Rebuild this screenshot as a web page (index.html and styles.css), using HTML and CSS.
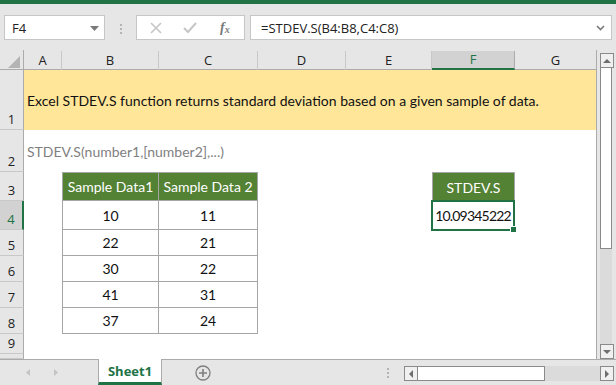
FILE: index.html
```html
<!DOCTYPE html>
<html lang="en">
  <head>
    <meta charset="UTF-8" />
    <title>STDEV.S</title>
    <link rel="stylesheet" href="styles.css">
  </head>
  <body>
    <div class="app">
      <div class="ribbon-edge"></div>

      <div class="formula-row">
        <div class="name-box">
          <span>F4</span>
          <svg class="caret" width="9" height="5" viewBox="0 0 9 5"><path d="M0 0h9L4.5 5z" fill="#7a7a7a"/></svg>
        </div>
        <div class="grip"><i></i><i></i><i></i></div>
        <div class="fx-buttons">
          <svg width="12" height="12" viewBox="0 0 12 12"><path d="M1 1l10 10M11 1L1 11" stroke="#c6c6c6" stroke-width="1.6"/></svg>
          <svg width="14" height="12" viewBox="0 0 14 12"><path d="M1 6l4 4L13 1" stroke="#c6c6c6" stroke-width="2" fill="none"/></svg>
          <span class="fx">f<sub>x</sub></span>
        </div>
        <div class="formula-input">
          <span>=STDEV.S(B4:B8,C4:C8)</span>
          <svg width="9" height="6" viewBox="0 0 9 6"><path d="M1 1l3.5 3.5L8 1" stroke="#7a7a7a" stroke-width="1.6" fill="none"/></svg>
        </div>
      </div>

      <div class="sheet-area">
        <div class="sheet">
          <div class="row col-heads">
            <div class="corner"><svg width="12" height="12" viewBox="0 0 12 12"><path d="M12 0v12H0z" fill="#b4b4b4"/></svg></div>
            <div class="ch">A</div>
            <div class="ch">B</div>
            <div class="ch">C</div>
            <div class="ch">D</div>
            <div class="ch">E</div>
            <div class="ch active">F</div>
            <div class="ch">G</div>
          </div>

          <div class="row r1">
            <div class="rh">1</div>
            <div class="cell title">Excel STDEV.S function returns standard deviation based on a given sample of data.</div>
          </div>

          <div class="row r2">
            <div class="rh">2</div>
            <div class="cell syntax">STDEV.S(number1,[number2],...)</div>
          </div>

          <div class="row r3">
            <div class="rh">3</div>
            <div class="cell"></div>
            <div class="cell th first">Sample Data1</div>
            <div class="cell th">Sample Data 2</div>
            <div class="cell"></div>
            <div class="cell"></div>
            <div class="cell th solo">STDEV.S</div>
            <div class="cell"></div>
          </div>

          <div class="row r4">
            <div class="rh active">4</div>
            <div class="cell"></div>
            <div class="cell td first">10</div>
            <div class="cell td">11</div>
            <div class="cell"></div>
            <div class="cell"></div>
            <div class="cell result">10.09345222</div>
            <div class="cell"></div>
          </div>

          <div class="row r5">
            <div class="rh">5</div>
            <div class="cell"></div>
            <div class="cell td first">22</div>
            <div class="cell td">21</div>
          </div>

          <div class="row r5">
            <div class="rh">6</div>
            <div class="cell"></div>
            <div class="cell td first">30</div>
            <div class="cell td">22</div>
          </div>

          <div class="row r5">
            <div class="rh">7</div>
            <div class="cell"></div>
            <div class="cell td first">41</div>
            <div class="cell td">31</div>
          </div>

          <div class="row r5">
            <div class="rh">8</div>
            <div class="cell"></div>
            <div class="cell td first">37</div>
            <div class="cell td">24</div>
          </div>

          <div class="row r9">
            <div class="rh">9</div>
          </div>

          <div class="row r10">
            <div class="rh"></div>
          </div>
        </div>

        <div class="vscroll">
          <div class="sb-btn"><svg width="8" height="4" viewBox="0 0 8 4"><path d="M0 4h8L4 0z" fill="#6e6e6e"/></svg></div>
          <div class="sb-thumb"></div>
          <div class="sb-track"></div>
          <div class="sb-btn"><svg width="8" height="4" viewBox="0 0 8 4"><path d="M0 0h8L4 4z" fill="#6e6e6e"/></svg></div>
        </div>
      </div>

      <div class="tabbar">
        <div class="tab-nav">
          <svg width="4" height="7" viewBox="0 0 4 7"><path d="M4 0v7L0 3.5z" fill="#c4c4c4"/></svg>
          <svg width="4" height="7" viewBox="0 0 4 7"><path d="M0 0v7L4 3.5z" fill="#c4c4c4"/></svg>
        </div>
        <div class="tab">Sheet1</div>
        <div class="add-sheet">
          <svg width="16" height="16" viewBox="0 0 16 16"><circle cx="8" cy="8" r="7" stroke="#7f7f7f" stroke-width="1.3" fill="none"/><path d="M8 4v8M4 8h8" stroke="#7f7f7f" stroke-width="1.6"/></svg>
        </div>
        <div class="grip tab-grip"><i></i><i></i><i></i></div>
        <div class="hscroll">
          <div class="sb-btn"><svg width="4" height="8" viewBox="0 0 4 8"><path d="M4 0v8L0 4z" fill="#6e6e6e"/></svg></div>
          <div class="sb-thumb"></div>
          <div class="sb-track"></div>
          <div class="sb-btn"><svg width="4" height="8" viewBox="0 0 4 8"><path d="M0 0v8L4 4z" fill="#6e6e6e"/></svg></div>
        </div>
      </div>
    </div>
  </body>
</html>
```

FILE: styles.css
```css
body {
  margin: 0;
  font-family: "Open Sans", "Noto Sans", sans-serif;
  background: #e6e6e6;
}

.app {
  width: 616px;
  height: 385px;
  display: flex;
  flex-direction: column;
  background: #e6e6e6;
  overflow: hidden;
}

.ribbon-edge {
  height: 4px;
  background: #217346;
}

/* formula bar */

.formula-row {
  height: 46px;
  display: flex;
  align-items: flex-start;
  padding: 11px 4px 0 4px;
  box-sizing: border-box;
}

.name-box {
  width: 101px;
  height: 25px;
  box-sizing: border-box;
  background: #fff;
  border: 1px solid #c6c6c6;
  display: flex;
  align-items: center;
  justify-content: space-between;
  padding: 0 5px 0 7px;
  font-size: 13px;
  color: #222;
}

.caret {
  margin-top: 1px;
}

.grip {
  display: flex;
  flex-direction: column;
  gap: 2px;
  width: 31px;
  align-items: center;
  padding-top: 9px;
}

.grip i {
  width: 2px;
  height: 2px;
  background: #b4b4b4;
}

.fx-buttons {
  width: 109px;
  height: 25px;
  box-sizing: border-box;
  background: #fff;
  border: 1px solid #c6c6c6;
  display: flex;
  align-items: center;
  padding: 0 10px 0 13px;
  gap: 21px;
}

.fx {
  font-family: "Liberation Serif", serif;
  font-style: italic;
  font-weight: bold;
  font-size: 14px;
  color: #7a7a7a;
  margin-left: 2px;
}

.fx sub {
  font-size: 10px;
  vertical-align: -1px;
}

.formula-input {
  flex: 1;
  margin-left: 5px;
  height: 25px;
  box-sizing: border-box;
  background: #fff;
  border: 1px solid #c6c6c6;
  display: flex;
  align-items: center;
  justify-content: space-between;
  padding: 0 6px 0 10px;
  font-size: 13px;
  color: #222;
}

/* sheet */

.sheet-area {
  height: 309px;
  display: flex;
}

.sheet {
  width: 597px;
  background: #fff;
  border-right: 1px solid #ababab;
  box-sizing: border-box;
  display: flex;
  flex-direction: column;
}

.row {
  display: grid;
  grid-template-columns: 24px 38px 97px 99px 88px 86px 83px 81px;
}

.col-heads {
  height: 20px;
  background: #e6e6e6;
  border-bottom: 1px solid #ababab;
  box-sizing: border-box;
}

.corner {
  display: flex;
  align-items: flex-end;
  justify-content: flex-end;
  padding: 0 3px 2px 0;
  border-right: 1px solid #ababab;
}

.ch {
  font-size: 13px;
  color: #222;
  text-align: center;
  line-height: 19px;
  border-right: 1px solid #c8c8c8;
  margin-top: 1px;
}

.ch:last-child {
  border-right: none;
}

.ch.active {
  background: #d2d2d2;
  color: #217346;
  border-bottom: 2px solid #217346;
  line-height: 17px;
  border-right-color: #ababab;
}

.rh {
  background: #e6e6e6;
  border-right: 1px solid #ababab;
  border-bottom: 1px solid #c8c8c8;
  box-sizing: border-box;
  font-size: 13px;
  color: #222;
  display: flex;
  align-items: flex-end;
  justify-content: center;
  padding-bottom: 1px;
}

.rh.active {
  background: #d2d2d2;
  color: #217346;
  border-right: 2px solid #217346;
}

.cell {
  font-family: "Lato", "Open Sans", sans-serif;
  font-size: 14px;
  color: #111;
  display: flex;
  align-items: center;
  box-sizing: border-box;
  white-space: nowrap;
}

.r1 { height: 60px; }
.r2 { height: 42px; }
.r3 { height: 29px; }
.r4 { height: 29px; }
.r5 { height: 26px; }
.r9 { height: 20px; }
.r10 { flex: 1; }

.r9 .rh {
  align-items: center;
}

.title {
  grid-column: 2 / 9;
  background: #ffe699;
  padding-left: 3px;
}

.syntax {
  grid-column: 2 / 9;
  color: #7f7f7f;
  padding-left: 3px;
}

.th,
.td {
  justify-content: center;
  border-right: 1px solid #a6a6a6;
  border-bottom: 1px solid #a6a6a6;
}

.th {
  background: #548235;
  color: #fff;
  border-top: 1px solid #a6a6a6;
}

.first,
.solo {
  border-left: 1px solid #a6a6a6;
}

.solo {
  border-bottom: none;
}

.result {
  position: relative;
  justify-content: center;
  letter-spacing: -0.8px;
  border: 2px solid #217346;
  margin: -1px 0 -1px -1px;
}

.result::after {
  content: "";
  position: absolute;
  right: -4px;
  bottom: -4px;
  width: 5px;
  height: 5px;
  background: #217346;
  border: 1px solid #fff;
}

/* scrollbars */

.vscroll {
  width: 17px;
  padding: 3px 2px 0 3px;
  box-sizing: border-box;
  display: flex;
  flex-direction: column;
}

.sb-btn {
  flex: none;
  width: 14px;
  height: 15px;
  box-sizing: border-box;
  border: 1px solid #8a8a8a;
  background: #f0f0f0;
  display: flex;
  align-items: center;
  justify-content: center;
}

.vscroll .sb-thumb {
  height: 180px;
  background: #fff;
  border: 1px solid #8a8a8a;
  border-top: none;
}

.sb-track {
  flex: 1;
  background: #dbdbdb;
}

.tabbar {
  flex: 1;
  display: flex;
  align-items: stretch;
  border-top: 1px solid #ababab;
}

.tab-nav {
  width: 98px;
  display: flex;
  align-items: center;
  gap: 24px;
  padding-left: 26px;
  box-sizing: border-box;
}

.tab {
  width: 64px;
  box-sizing: border-box;
  background: #fff;
  border-left: 1px solid #ababab;
  border-right: 1px solid #ababab;
  border-bottom: 3px solid #217346;
  margin-top: -1px;
  font-weight: bold;
  font-size: 13px;
  color: #217346;
  display: flex;
  align-items: center;
  justify-content: center;
}

.add-sheet {
  width: 82px;
  display: flex;
  align-items: center;
  justify-content: center;
}

.tab-grip {
  width: 160px;
  align-items: flex-end;
  padding: 8px 15px 0 0;
  box-sizing: border-box;
}

.hscroll {
  width: 210px;
  height: 15px;
  margin-top: 6px;
  display: flex;
}

.hscroll .sb-btn {
  height: 15px;
}

.hscroll .sb-thumb {
  width: 127px;
  background: #fff;
  border: 1px solid #8a8a8a;
  border-left: none;
  box-sizing: border-box;
}
```
